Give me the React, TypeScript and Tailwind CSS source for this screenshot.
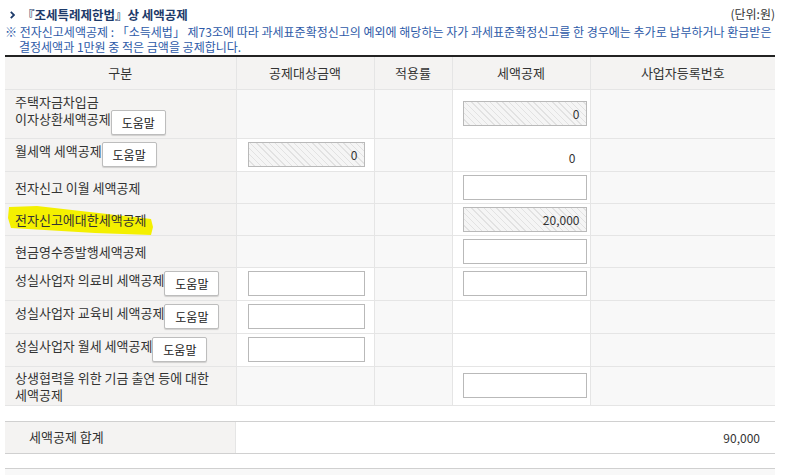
import React from "react";

const hatch =
  "bg-[repeating-linear-gradient(45deg,#f5f5f5_0px,#f5f5f5_3.4px,#e2e2e2_3.4px,#e2e2e2_4.4px)]";

function HelpBtn() {
  return (
    <button className="inline-block align-top w-[55px] h-[25px] bg-white border border-[#bdbdbd] rounded-[2px] shadow-[0_1px_1px_rgba(0,0,0,0.15)] text-[12px] leading-[23px] text-[#222]">
      도움말
    </button>
  );
}

function Box({ value, hatched, narrow }: { value?: string; hatched?: boolean; narrow?: boolean }) {
  return (
    <div
      className={`${hatched ? hatch : "bg-white"} ${narrow ? "w-[117px] ml-[11px]" : "w-[124px] ml-[10px]"} h-[25px] border border-[#b9b9b9] text-right pr-[6px] text-[12px] leading-[23px] text-[#333]`}
    >
      {value}
    </div>
  );
}

const lab = "bg-[#f4f3f2] pl-[10px] text-left align-middle border-t border-b border-r border-[#e5e5e5] text-[13px] leading-[17px]";
const grey = "bg-[#f8f8f8] border border-[#e5e5e5]";
const white = "bg-white border border-[#e5e5e5] align-middle";
const last = "bg-[#f8f8f8] border-t border-b border-l border-[#e5e5e5]";

export default function App() {
  return (
    <div className="w-[792px] h-[475px] overflow-hidden bg-white pl-[5px] font-['Noto_Sans_CJK_KR','Noto_Sans',sans-serif] text-[#333]">
      <div className="w-[770px]">
        <div className="flex justify-between h-[24px] pt-[5px] leading-[17px]">
          <div className="flex items-center pl-[5px] gap-[7px]">
            <svg width="5" height="8" viewBox="0 0 5 8">
              <path d="M0.8 0.8 L4 4 L0.8 7.2" stroke="#1d3a6a" strokeWidth="1.8" fill="none" />
            </svg>
            <span className="text-[12.5px] font-bold text-[#1d3a6a]">『조세특례제한법』상 세액공제</span>
          </div>
          <span className="text-[12px] text-[#333]">(단위:원)</span>
        </div>
        <div className="text-[12px] leading-[15px] text-[#2d5aa8] whitespace-nowrap">
          <div>※ 전자신고세액공제 : 「소득세법」 제73조에 따라 과세표준확정신고의 예외에 해당하는 자가 과세표준확정신고를 한 경우에는 추가로 납부하거나 환급받은</div>
          <div className="pl-[14px]">결정세액과 1만원 중 적은 금액을 공제합니다.</div>
        </div>
        <table className="mt-[1px] table-fixed border-collapse w-[770px] text-[12px] text-[#333]">
          <colgroup>
            <col className="w-[231px]" />
            <col className="w-[138px]" />
            <col className="w-[78px]" />
            <col className="w-[138px]" />
            <col className="w-[185px]" />
          </colgroup>
          <thead>
            <tr className="h-[33px] bg-[#f4f3f2] border-t-2 border-t-[#222] border-b border-b-[#a5a5a5] text-[13px]">
              <th className="font-normal border-r border-[#e5e5e5]">구분</th>
              <th className="font-normal border-r border-[#e5e5e5]">공제대상금액</th>
              <th className="font-normal border-r border-[#e5e5e5]">적용률</th>
              <th className="font-normal border-r border-[#e5e5e5]">세액공제</th>
              <th className="font-normal">사업자등록번호</th>
            </tr>
          </thead>
          <tbody>
            <tr className="h-[49px]">
              <td className={lab}>
                주택자금차입금
                <br />
                이자상환세액공제
                <HelpBtn />
              </td>
              <td className={grey}></td>
              <td className={grey}></td>
              <td className={white}>
                <Box value="0" hatched />
              </td>
              <td className={last}></td>
            </tr>
            <tr className="h-[33px]">
              <td className={lab}>
                월세액 세액공제
                <HelpBtn />
              </td>
              <td className={white}>
                <Box value="0" hatched narrow />
              </td>
              <td className={grey}></td>
              <td className={`${white} text-right pr-[14px] pt-[7px]`}>0</td>
              <td className={last}></td>
            </tr>
            <tr className="h-[32px]">
              <td className={lab}>전자신고 이월 세액공제</td>
              <td className={grey}></td>
              <td className={grey}></td>
              <td className={white}>
                <Box />
              </td>
              <td className={last}></td>
            </tr>
            <tr className="h-[32px]">
              <td className={`${lab} relative`}>
                <svg className="absolute left-0 top-0 w-[160px] h-[32px] pointer-events-none" viewBox="0 0 160 32">
                  <path d="M4 3 L32 2 L146 15 L148 23 L146 31 L90 29 L6 24 L3 14 Z" fill="#f4f000" />
                </svg>
                <span className="relative">전자신고에대한세액공제</span>
              </td>
              <td className={grey}></td>
              <td className={grey}></td>
              <td className={white}>
                <Box value="20,000" hatched />
              </td>
              <td className={last}></td>
            </tr>
            <tr className="h-[32px]">
              <td className={lab}>현금영수증발행세액공제</td>
              <td className={grey}></td>
              <td className={grey}></td>
              <td className={white}>
                <Box />
              </td>
              <td className={last}></td>
            </tr>
            <tr className="h-[33px]">
              <td className={lab}>
                성실사업자 의료비 세액공제
                <HelpBtn />
              </td>
              <td className={white}>
                <Box narrow />
              </td>
              <td className={grey}></td>
              <td className={white}>
                <Box />
              </td>
              <td className={last}></td>
            </tr>
            <tr className="h-[33px]">
              <td className={lab}>
                성실사업자 교육비 세액공제
                <HelpBtn />
              </td>
              <td className={white}>
                <Box narrow />
              </td>
              <td className={grey}></td>
              <td className={white}></td>
              <td className={last}></td>
            </tr>
            <tr className="h-[33px]">
              <td className={lab}>
                성실사업자 월세 세액공제
                <HelpBtn />
              </td>
              <td className={white}>
                <Box narrow />
              </td>
              <td className={grey}></td>
              <td className={white}></td>
              <td className={last}></td>
            </tr>
            <tr className="h-[39px] border-b border-b-[#d0d0d0]">
              <td className={lab}>
                상생협력을 위한 기금 출연 등에 대한
                <br />
                세액공제
              </td>
              <td className={grey}></td>
              <td className={grey}></td>
              <td className={white}>
                <Box />
              </td>
              <td className={last}></td>
            </tr>
          </tbody>
        </table>
        <div className="mt-[15px] flex h-[33px] border-t border-b border-[#d0d0d0] text-[12px]">
          <div className="w-[231px] bg-[#f4f3f2] border-r border-[#e5e5e5] pl-[24px] flex items-center text-[13px]">세액공제 합계</div>
          <div className="flex-1 flex items-center justify-end pr-[15px] pt-[1px]">90,000</div>
        </div>
        <div className="mt-[14px] h-[10px] border-t border-[#d0d0d0] bg-[#f8f8f8]"></div>
      </div>
    </div>
  );
}
